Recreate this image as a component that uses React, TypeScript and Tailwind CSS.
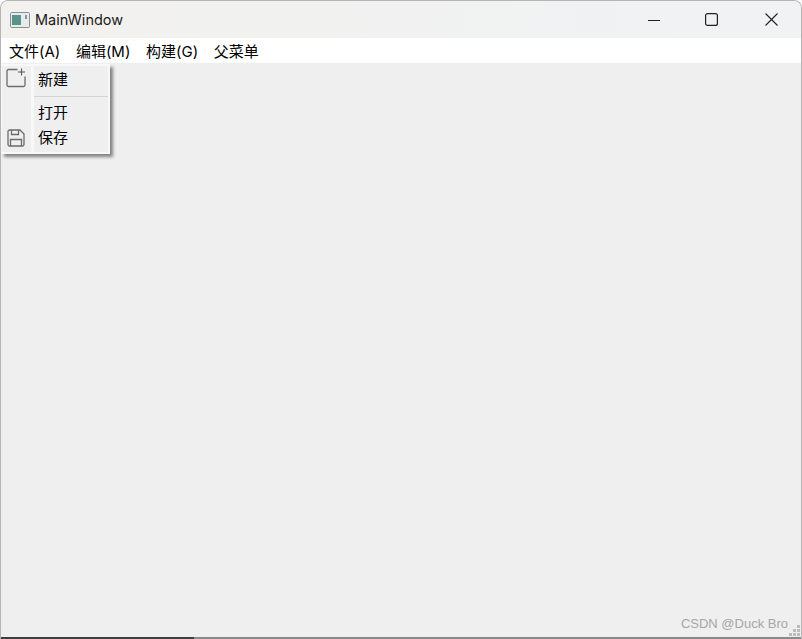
const font = { fontFamily: 'Inter, "Noto Sans CJK SC", sans-serif' };

const menus = ["文件(A)", "编辑(M)", "构建(G)", "父菜单"];

function AppIcon() {
  return (
    <svg width="20" height="16" viewBox="0 0 20 16" className="shrink-0">
      <rect x="0.5" y="0.5" width="19" height="15" rx="1" fill="#e8eaec" stroke="#8b8f94" />
      <defs>
        <linearGradient id="g" x1="0" y1="0" x2="0" y2="1">
          <stop offset="0" stopColor="#5f8f9a" />
          <stop offset="1" stopColor="#4f9a78" />
        </linearGradient>
      </defs>
      <rect x="2" y="3" width="9" height="10" fill="url(#g)" />
      <rect x="15" y="3" width="2" height="4" fill="#6f9fb0" />
    </svg>
  );
}

function NewIcon() {
  return (
    <svg width="20" height="20" viewBox="0 0 20 20" fill="none" stroke="#6b6b6b" strokeWidth="1.3">
      <path d="M11.5 1.5H2.5A1.5 1.5 0 0 0 1 3v14A1.5 1.5 0 0 0 2.5 18.5h15A1.5 1.5 0 0 0 19 17V8.5" />
      <path d="M15.5 0.5v7M12 4h7" stroke="#555" strokeWidth="1.1" />
    </svg>
  );
}

function SaveIcon() {
  return (
    <svg width="18" height="18" viewBox="0 0 18 18" fill="none" stroke="#6b6b6b" strokeWidth="1.3">
      <path d="M1 2.5A1.5 1.5 0 0 1 2.5 1H13l4 4v10.5a1.5 1.5 0 0 1-1.5 1.5h-13A1.5 1.5 0 0 1 1 15.5z" />
      <path d="M4.5 1v4.5h7V1M3.5 17v-6.5h11V17" />
    </svg>
  );
}

function PopupText({ label, h }: { label: string; h: string }) {
  return <div className={`flex items-center pl-[4px] text-[15px] text-black ${h}`}>{label}</div>;
}

function SizeGrip() {
  const dots = [
    [8, 0],
    [4, 4],
    [8, 4],
    [0, 8],
    [4, 8],
    [8, 8],
  ];
  return (
    <svg width="11" height="11" viewBox="0 0 11 11" className="absolute bottom-[3px] right-[1px]">
      {dots.map(([x, y]) => (
        <rect key={`${x}-${y}`} x={x} y={y} width="3" height="3" fill="#bcbcbc" />
      ))}
    </svg>
  );
}

export default function App() {
  return (
    <div className="relative flex h-[639px] w-[802px] flex-col overflow-hidden rounded-t-[8px] border border-b-0 border-[#b5b5b5] bg-[#efefef]" style={font}>
      <div className="flex h-[37px] shrink-0 items-center bg-gradient-to-r from-[#f2f1ee] to-[#f0f2f4] pl-[9px]">
        <AppIcon />
        <span className="ml-[5px] text-[14.5px] text-[#1a1a1a]">MainWindow</span>
        <div className="ml-auto flex h-full items-center">
          <div className="flex w-[59px] justify-center">
            <svg width="12" height="12" viewBox="0 0 12 12" stroke="#222" strokeWidth="1.1"><path d="M0 6.5h12" /></svg>
          </div>
          <div className="flex w-[59px] justify-center pr-[2px]">
            <svg width="13" height="13" viewBox="0 0 13 13" fill="none" stroke="#222" strokeWidth="1.2"><rect x="0.6" y="0.6" width="11.8" height="11.8" rx="2" /></svg>
          </div>
          <div className="flex w-[59px] justify-center">
            <svg width="13" height="13" viewBox="0 0 13 13" stroke="#222" strokeWidth="1.1"><path d="M0.5 0.5l12 12M12.5 0.5l-12 12" /></svg>
          </div>
        </div>
      </div>

      <div className="flex h-[25px] shrink-0 items-center gap-[15.6px] bg-white pl-[8px] pt-[3px] text-[15px] text-black">
        {menus.map((m) => (
          <span key={m}>{m}</span>
        ))}
      </div>

      <div className="flex-1" />

      <div className="flex h-[2px] shrink-0">
        <div className="w-[193px] bg-[#3f3f3f]" />
        <div className="flex-1 bg-[#8a8a8a]" />
      </div>

      {/* dropdown */}
      <div className="absolute left-[0px] top-[63px] flex h-[90px] w-[109px] bg-[#f8f8f8] pb-[2px] pl-[1px] pr-[2px] pt-[2px] shadow-[3px_3px_3px_rgba(0,0,0,0.45)]">
        <div className="flex w-[29px] shrink-0 flex-col bg-[#efefef]">
          <div className="flex h-[26px] items-start pl-[4px] pt-[2px]">
            <NewIcon />
          </div>
          <div className="h-[34px]" />
          <div className="flex h-[25px] items-center pb-[2px] pl-[5px]">
            <SaveIcon />
          </div>
        </div>
        <div className="ml-[3px] flex-1 bg-[#efefef]">
          <PopupText label="新建" h="h-[27px] pt-[2px]" />
          <div className="mt-[3px] h-px bg-[#d4d4d4]" />
          <div className="h-[4px]" />
          <PopupText label="打开" h="h-[25px]" />
          <PopupText label="保存" h="h-[25px]" />
        </div>
      </div>

      <span className="absolute bottom-[6px] right-[13px] text-[13px] text-[#a6a6a6]" style={{ fontFamily: '"Liberation Sans", sans-serif' }}>
        CSDN @Duck Bro
      </span>
      <SizeGrip />
    </div>
  );
}
